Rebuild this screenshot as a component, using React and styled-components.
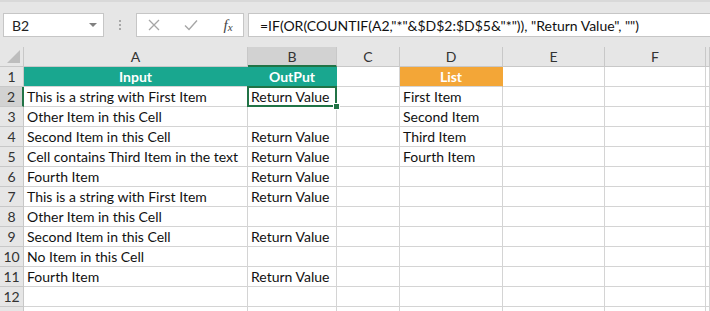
import React from "react";
import styled, { createGlobalStyle, css } from "styled-components";

const Global = createGlobalStyle`
  html, body { margin: 0; padding: 0; background: #e6e6e6; }
  body { width: 710px; height: 311px; overflow: hidden; font-family: Lato, "Open Sans", sans-serif; }
`;

const Page = styled.div`
  width: 710px;
  height: 311px;
  overflow: hidden;
  background: #e6e6e6;
  border-top: 2px solid #d9d9d9;
  box-sizing: border-box;
`;

const FormulaBar = styled.div`
  display: flex;
  align-items: stretch;
  height: 24px;
  margin-top: 11px;
  padding-left: 3px;
`;

const NameBox = styled.div`
  width: 101px;
  box-sizing: border-box;
  background: #fff;
  border: 1px solid #c6c6c6;
  display: flex;
  align-items: center;
  justify-content: space-between;
  padding: 0 6px 0 8px;
  font-size: 14px;
  color: #222;
`;

const Arrow = styled.span`
  width: 0;
  height: 0;
  border-left: 4px solid transparent;
  border-right: 4px solid transparent;
  border-top: 4px solid #808080;
`;

const Grip = styled.div`
  width: 32px;
  display: flex;
  flex-direction: column;
  align-items: center;
  justify-content: center;
  gap: 2px;
  & > span {
    width: 2px;
    height: 2px;
    background: #a8a8a8;
  }
`;

const ButtonsBox = styled.div`
  width: 108px;
  box-sizing: border-box;
  background: #fff;
  border: 1px solid #c6c6c6;
  display: flex;
  align-items: center;
  padding-left: 11px;
`;

const IconSlot = styled.div`
  width: ${(p) => p.$w}px;
  display: flex;
  align-items: center;
  justify-content: center;
`;

const Fx = styled.span`
  font-family: "Liberation Serif", serif;
  font-style: italic;
  font-size: 15px;
  color: #444;
  & > sub {
    font-size: 11px;
    vertical-align: 0;
    position: relative;
    top: 1px;
  }
`;

const FormulaInput = styled.div`
  flex: 1;
  margin-left: 4px;
  background: #fff;
  border: 1px solid #c6c6c6;
  border-right: none;
  display: flex;
  align-items: center;
  padding-left: 11px;
  font-size: 14px;
  color: #111;
  white-space: pre;
`;

const Sheet = styled.div`
  margin-top: 10px;
  display: grid;
  grid-template-columns: 24px 224px 89px 63px 103px 102px 101px 1fr;
  grid-auto-rows: 20px;
`;

const cellBase = css`
  box-sizing: border-box;
  border-right: 1px solid #d4d4d4;
  border-bottom: 1px solid #d4d4d4;
  white-space: nowrap;
  overflow: visible;
`;

const Corner = styled.div`
  ${cellBase};
  background: #e6e6e6;
  border-right-color: #c8c8c8;
  border-bottom-color: #c8c8c8;
  position: relative;
  &::after {
    content: "";
    position: absolute;
    right: 3px;
    bottom: 3px;
    width: 0;
    height: 0;
    border-left: 13px solid transparent;
    border-bottom: 13px solid #bdbdbd;
  }
`;

const ColHeader = styled.div`
  ${cellBase};
  background: ${(p) => (p.$sel ? "#d2d2d2" : "#e6e6e6")};
  border-right-color: #c8c8c8;
  border-bottom: ${(p) => (p.$sel ? "2px solid #217346" : "1px solid #c8c8c8")};
  display: flex;
  align-items: center;
  justify-content: center;
  font-size: 14px;
  color: #333;
`;

const RowHeader = styled.div`
  ${cellBase};
  background: ${(p) => (p.$sel ? "#d2d2d2" : "#e6e6e6")};
  border-right: ${(p) => (p.$sel ? "2px solid #217346" : "1px solid #c8c8c8")};
  border-bottom-color: #c8c8c8;
  display: flex;
  align-items: flex-end;
  justify-content: center;
  padding-bottom: 1px;
  font-size: 14px;
  color: #333;
`;

const fills = {
  teal: "#19a78f",
  orange: "#f3a637",
};

const Cell = styled.div`
  ${cellBase};
  position: relative;
  background: #fff;
  display: flex;
  align-items: flex-end;
  justify-content: ${(p) => (p.$center ? "center" : "flex-start")};
  padding: 0 0 1px 3px;
  font-size: 14px;
  color: #111;
  ${(p) =>
    p.$fill &&
    css`
      background: ${fills[p.$fill]};
      border-right-color: ${fills[p.$fill]};
      color: #fff;
      font-weight: 700;
      padding-left: 0;
    `}
  ${(p) =>
    p.$active &&
    css`
      &::before {
        content: "";
        position: absolute;
        left: -1px;
        top: -1px;
        right: -1px;
        bottom: -1px;
        border: 2px solid #217346;
        pointer-events: none;
      }
      &::after {
        content: "";
        position: absolute;
        right: -4px;
        bottom: -4px;
        width: 5px;
        height: 5px;
        background: #217346;
        border: 1px solid #fff;
        z-index: 2;
      }
    `}
`;

const cols = ["A", "B", "C", "D", "E", "F", ""];

const rows = [
  { n: 1, a: "Input", b: "OutPut", d: "List", header: true },
  { n: 2, a: "This is a string with First Item", b: "Return Value", d: "First Item" },
  { n: 3, a: "Other Item in this Cell", b: "", d: "Second Item" },
  { n: 4, a: "Second Item in this Cell", b: "Return Value", d: "Third Item" },
  { n: 5, a: "Cell contains Third Item in the text", b: "Return Value", d: "Fourth Item" },
  { n: 6, a: "Fourth Item", b: "Return Value" },
  { n: 7, a: "This is a string with First Item", b: "Return Value" },
  { n: 8, a: "Other Item in this Cell", b: "" },
  { n: 9, a: "Second Item in this Cell", b: "Return Value" },
  { n: 10, a: "No Item in this Cell", b: "" },
  { n: 11, a: "Fourth Item", b: "Return Value" },
  { n: 12, a: "", b: "" },
  { n: null, a: "", b: "" },
];

const CrossIcon = () => (
  <svg width="12" height="12" viewBox="0 0 12 12">
    <path d="M1 1 L11 11 M11 1 L1 11" stroke="#a6a6a6" strokeWidth="1.3" fill="none" />
  </svg>
);

const CheckIcon = () => (
  <svg width="14" height="12" viewBox="0 0 14 12">
    <path d="M1 6.5 L5 10.5 L13 1.5" stroke="#a6a6a6" strokeWidth="1.4" fill="none" />
  </svg>
);

export default function App() {
  return (
    <Page>
      <Global />
      <FormulaBar>
        <NameBox>
          <span>B2</span>
          <Arrow />
        </NameBox>
        <Grip>
          <span />
          <span />
          <span />
        </Grip>
        <ButtonsBox>
          <IconSlot $w={12}>
            <CrossIcon />
          </IconSlot>
          <IconSlot $w={24} />
          <IconSlot $w={14}>
            <CheckIcon />
          </IconSlot>
          <IconSlot $w={22} />
          <IconSlot $w={16}>
            <Fx>
              f<sub>x</sub>
            </Fx>
          </IconSlot>
        </ButtonsBox>
        <FormulaInput>{'=IF(OR(COUNTIF(A2,"*"&$D$2:$D$5&"*")), "Return Value", "")'}</FormulaInput>
      </FormulaBar>
      <Sheet>
        <Corner />
        {cols.map((c, i) => (
          <ColHeader key={i} $sel={c === "B"}>
            {c}
          </ColHeader>
        ))}
        {rows.map((r, i) => (
          <React.Fragment key={i}>
            <RowHeader $sel={r.n === 2}>{r.n}</RowHeader>
            <Cell $fill={r.header ? "teal" : undefined} $center={r.header}>
              {r.a}
            </Cell>
            <Cell $fill={r.header ? "teal" : undefined} $center={r.header} $active={r.n === 2}>
              {r.b}
            </Cell>
            <Cell />
            <Cell $fill={r.header ? "orange" : undefined} $center={r.header}>
              {r.d || ""}
            </Cell>
            <Cell />
            <Cell />
            <Cell />
          </React.Fragment>
        ))}
      </Sheet>
    </Page>
  );
}
